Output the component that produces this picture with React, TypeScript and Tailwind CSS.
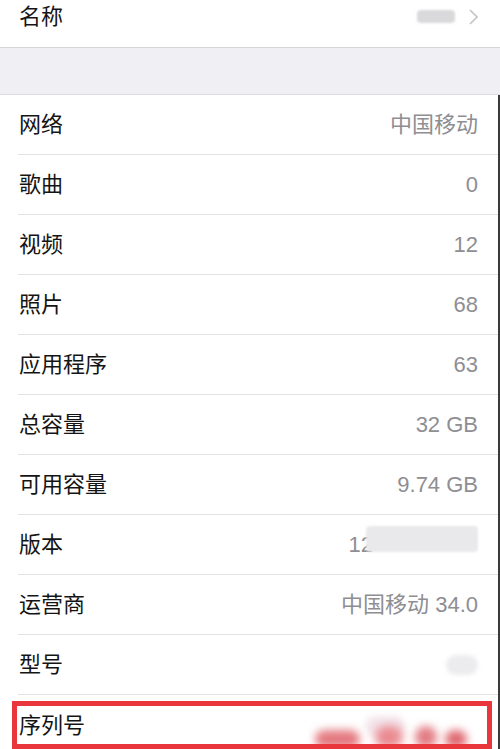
import React from 'react';

const rows: { label: string; value?: string }[] = [
  { label: '网络', value: '中国移动' },
  { label: '歌曲', value: '0' },
  { label: '视频', value: '12' },
  { label: '照片', value: '68' },
  { label: '应用程序', value: '63' },
  { label: '总容量', value: '32 GB' },
  { label: '可用容量', value: '9.74 GB' },
];

function Row({ label, children, last }: { label: string; children?: React.ReactNode; last?: boolean }) {
  return (
    <div className="relative h-[60px] pl-[18px]">
      <div className={`flex h-full items-center justify-between pr-[20px] ${last ? '' : 'border-b border-[#e2e2e4]'}`}>
        <span className="pl-px text-[22px] text-[#141414]">{label}</span>
        <span className="text-[22px] text-[#8e8e93]">{children}</span>
      </div>
    </div>
  );
}

export default function App() {
  return (
    <div
      className="relative h-[749px] w-[500px] overflow-hidden bg-white"
      style={{ fontFamily: '"Liberation Sans", "Noto Sans CJK SC", sans-serif' }}
    >
      {/* name row, top of it cut off */}
      <div className="flex h-[48px] items-center justify-between border-b border-[#d6d6da] pb-[14px] pl-[19px] pr-[22px]">
        <span className="text-[22px] text-[#141414]">名称</span>
        <div className="flex items-center gap-[14px]">
          <div className="h-[13px] w-[38px] rounded-[4px] bg-[#d9d9db] blur-[1px]" />
          <svg width="9" height="16" viewBox="0 0 9 16" fill="none">
            <path d="M1 1l7 7-7 7" stroke="#c4c4c8" strokeWidth="1.6" />
          </svg>
        </div>
      </div>

      <div className="h-[47px] border-b border-[#dcdce0] bg-[#efeff4]" />

      <div className="border-r-2 border-[#3a3a3a]">
        {rows.map((r) => (
          <Row key={r.label} label={r.label}>
            {r.value}
          </Row>
        ))}

        <Row label="版本">
          <span className="relative flex items-center">
            <span>12</span>
            <span className="absolute left-[17px] top-[-2px] h-[26px] w-[112px] rounded-[4px] bg-[#e9e9eb] blur-[1px]" />
            <span className="w-[105px]" />
          </span>
        </Row>

        <Row label="运营商">中国移动 34.0</Row>

        <Row label="型号">
          <span className="block h-[20px] w-[32px] rounded-full bg-[#ececee] blur-[2px]" />
        </Row>

        <Row label="序列号" last />
      </div>

      {/* blurred serial number */}
      <div className="absolute left-[315px] top-[716px] h-[33px] w-[160px]">
        <div className="absolute left-[0px] top-[14px] h-[18px] w-[45px] rounded-full bg-[#e47a80] blur-[4px]" />
        <div className="absolute left-[50px] top-[0px] h-[20px] w-[40px] rounded-full bg-[#f3e6ec] blur-[3px]" />
        <div className="absolute left-[60px] top-[10px] h-[22px] w-[28px] rounded-full bg-[#e98a90] blur-[5px]" />
        <div className="absolute left-[100px] top-[10px] h-[22px] w-[22px] rounded-full bg-[#e27d84] blur-[4px]" />
        <div className="absolute left-[130px] top-[14px] h-[18px] w-[22px] rounded-full bg-[#e06a72] blur-[4px]" />
      </div>

      {/* red highlight box */}
      <div className="absolute left-[12px] top-[701px] h-[48px] w-[480px] border-[5px] border-[#e8363c]" />
    </div>
  );
}
